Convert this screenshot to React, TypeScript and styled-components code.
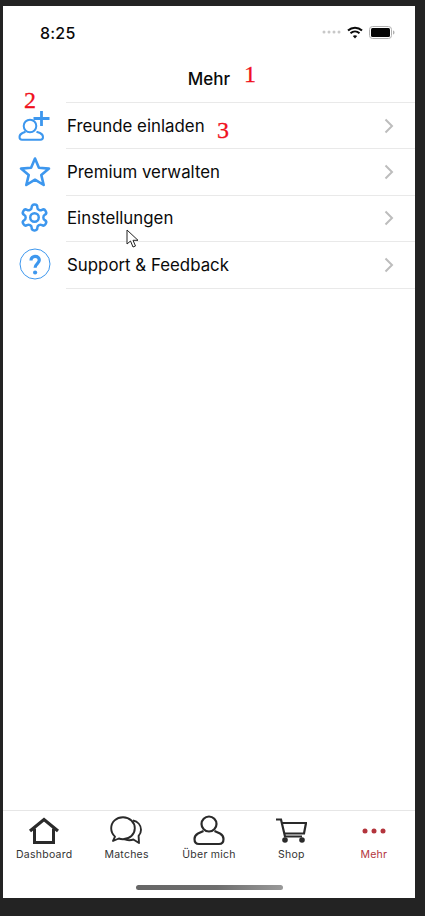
import styled, { createGlobalStyle } from 'styled-components'
import type { ReactNode } from 'react'

const GlobalStyle = createGlobalStyle`
	html, body {
		margin: 0;
		padding: 0;
		height: 100%;
		background: #232323;
		overflow: hidden;
	}
`

const Screen = styled.div`
	position: relative;
	box-sizing: border-box;
	display: flex;
	flex-direction: column;
	width: 412px;
	height: 892px;
	margin: 6px 0 0 3px;
	background: #fff;
	font-family: Inter, 'Liberation Sans', sans-serif;
	color: #0a0a0a;
`

const StatusBar = styled.div`
	display: flex;
	align-items: center;
	justify-content: space-between;
	height: 52px;
	padding: 0 20px 0 37px;
	box-sizing: border-box;
`

const Time = styled.span`
	font-size: 16px;
	font-weight: 500;
	letter-spacing: 0.2px;
	margin-top: 1px;
`

const StatusIcons = styled.div`
	display: flex;
	align-items: center;
	gap: 6px;
`

const Header = styled.h1`
	margin: 0;
	height: 44px;
	padding-bottom: 2px;
	box-sizing: border-box;
	display: flex;
	align-items: center;
	justify-content: center;
	font-size: 17px;
	font-weight: 500;
`

const List = styled.div`
	display: flex;
	flex-direction: column;
	flex: 1;
`

const Row = styled.div`
	display: flex;
	align-items: center;
	height: 46.4px;
`

const RowIcon = styled.div`
	display: flex;
	align-items: center;
	justify-content: center;
	width: 63px;
	flex: none;
	color: #3d97ee;
`

const RowBody = styled.div`
	flex: 1;
	height: 100%;
	display: flex;
	align-items: center;
	justify-content: space-between;
	padding: 0 21px 0 1px;
	box-sizing: border-box;
	border-top: 1px solid #e9e9e9;
	font-size: 16.85px;
`

const LastLine = styled.div`
	height: 1px;
	margin-left: 63px;
	background: #e9e9e9;
`

const TabBar = styled.nav`
	display: flex;
	height: 88px;
	box-sizing: border-box;
	border-top: 1px solid #e6e6e6;
	padding-top: 4px;
`

const Tab = styled.div<{ $active?: boolean }>`
	flex: 1;
	display: flex;
	flex-direction: column;
	align-items: center;
	font-size: 10.5px;
	font-weight: 400;
	letter-spacing: 0.25px;
	color: ${(p) => (p.$active ? '#b3343c' : '#333')};
`

const TabIcon = styled.div`
	height: 31px;
	display: flex;
	align-items: center;
	justify-content: center;
`

const TabLabel = styled.span`
	margin-top: 2px;
`

const HomeIndicator = styled.div`
	position: absolute;
	left: 133px;
	bottom: 8px;
	width: 147px;
	height: 5px;
	border-radius: 3px;
	background: linear-gradient(90deg, #666 0%, #6e6e6e 55%, #999 100%);
`

const Note = styled.span<{ $x: number; $y: number }>`
	position: absolute;
	left: ${(p) => p.$x}px;
	top: ${(p) => p.$y}px;
	font-family: 'Liberation Serif', serif;
	font-size: 24px;
	line-height: 24px;
	color: #f0101c;
	-webkit-text-stroke: 0.3px #f0101c;
`

const Cursor = styled.svg`
	position: absolute;
	left: 123px;
	top: 223px;
`

const Chevron = () => (
	<svg width="10" height="16" viewBox="0 0 10 16" fill="none" stroke="#bdbdbd" strokeWidth="2">
		<path d="M1.5 1.5 8 8l-6.5 6.5" />
	</svg>
)

const AddFriendIcon = () => (
	<svg width="33" height="32" viewBox="0 0 33 32" fill="none" stroke="currentColor" strokeWidth="2">
		<circle cx="12" cy="17" r="6.300" />
		<path d="M7.500 22.800 4.500 24C2.500 25 1.500 26.500 1.500 28c0 1.800 1 2.800 2.500 2.800h18.500c1.500 0 2.500-1 2.500-2.800 0-1.500-1-3-3-4l-3.500-1.200" />
		<path d="M23.500 2v15M15.500 9.500h16" strokeWidth="2.800" />
	</svg>
)

const StarIcon = () => (
	<svg width="32" height="31" viewBox="0 0 32 31" fill="none" stroke="currentColor" strokeWidth="2.600" strokeLinejoin="round">
		<path d="M16 2.500l3.900 9.300 10.100.8-7.700 6.500 2.400 9.900L16 23.700 7.300 29l2.400-9.900L2 12.600l10.100-.8z" />
	</svg>
)

const GearIcon = () => (
	<svg width="31" height="31" viewBox="0 0 24 24" fill="none" stroke="currentColor" strokeWidth="1.900" strokeLinecap="round" strokeLinejoin="round">
		<path d="M12.220 2h-.44a2 2 0 0 0-2 2v.18a2 2 0 0 1-1 1.730l-.43.250a2 2 0 0 1-2 0l-.15-.080a2 2 0 0 0-2.730.730l-.220.380a2 2 0 0 0 .730 2.730l.150.100a2 2 0 0 1 1 1.720v.510a2 2 0 0 1-1 1.740l-.150.090a2 2 0 0 0-.730 2.730l.220.380a2 2 0 0 0 2.730.730l.150-.080a2 2 0 0 1 2 0l.43.250a2 2 0 0 1 1 1.730V20a2 2 0 0 0 2 2h.44a2 2 0 0 0 2-2v-.18a2 2 0 0 1 1-1.730l.43-.250a2 2 0 0 1 2 0l.15.080a2 2 0 0 0 2.730-.730l.220-.390a2 2 0 0 0-.730-2.730l-.150-.080a2 2 0 0 1-1-1.740v-.500a2 2 0 0 1 1-1.740l.150-.090a2 2 0 0 0 .730-2.730l-.220-.380a2 2 0 0 0-2.730-.730l-.150.080a2 2 0 0 1-2 0l-.43-.250a2 2 0 0 1-1-1.730V4a2 2 0 0 0-2-2z" />
		<circle cx="12" cy="12" r="3.300" />
	</svg>
)

const HelpIcon = () => (
	<svg width="32" height="32" viewBox="0 0 32 32" fill="none" stroke="currentColor">
		<circle cx="16" cy="16" r="15" strokeWidth="1" />
		<path d="M12 12.500c0-2.600 1.800-4.200 4.200-4.200s4.100 1.500 4.100 3.800c0 3.400-4.200 3.600-4.200 7.700" strokeWidth="3.200" />
		<circle cx="16.100" cy="24.500" r="2.100" fill="currentColor" stroke="none" />
	</svg>
)

const HomeTabIcon = () => (
	<svg width="32" height="27" viewBox="0 0 32 27" fill="none" stroke="#2a2a2a" strokeWidth="3" strokeLinejoin="miter">
		<path d="M2 14 16 2.500 30 14" strokeWidth="3.200" />
		<path d="M6.500 11.500V25.500h19V11.500" />
	</svg>
)

const ChatTabIcon = () => (
	<svg width="33" height="29" viewBox="0 0 33 29" fill="none" stroke="#2a2a2a" strokeWidth="1.900" strokeLinejoin="round">
		<path d="M13 1.200C6.300 1.200 1.200 6 1.200 12.300c0 3.400 1.500 6.300 3.800 8.300L3 25l5.800-2.500c1.300.5 2.700.7 4.200.7 6.700 0 11.800-4.800 11.800-10.900S19.700 1.200 13 1.200z" />
		<path d="M23 4.500c4.800 1 8 4.700 8 9.200 0 2.400-.9 4.500-2.400 6.100L29 27l-5.600-3.500c-1.300.5-2.700.7-4.200.7-1.800 0-3.500-.3-5-1" />
	</svg>
)

const UserTabIcon = () => (
	<svg width="32" height="31" viewBox="0 0 32 31" fill="none" stroke="#2a2a2a" strokeWidth="2.200">
		<circle cx="16" cy="9" r="7.500" />
		<path d="M10.500 16 5 18.500C2.500 19.800 1.500 21.500 1.500 24c0 3 1.500 5 4.500 5h20c3 0 4.500-2 4.500-5 0-2.500-1-4.200-3.500-5.500L21.500 16" />
	</svg>
)

const CartTabIcon = () => (
	<svg width="32" height="27" viewBox="0 0 32 27" fill="none" stroke="#2a2a2a" strokeWidth="2.200">
		<path d="M1 2.500h5l4 17h17" />
		<path d="M7 6h24l-2 10.500H9.500" />
		<circle cx="10" cy="23" r="2.800" fill="#2a2a2a" stroke="none" />
		<circle cx="27" cy="23" r="2.800" fill="#2a2a2a" stroke="none" />
	</svg>
)

const MoreTabIcon = () => (
	<svg width="24" height="6" viewBox="0 0 24 6" fill="#b3343c">
		<circle cx="3" cy="3" r="2.500" />
		<circle cx="12" cy="3" r="2.500" />
		<circle cx="21" cy="3" r="2.500" />
	</svg>
)

const SignalDots = () => (
	<svg width="19" height="4" viewBox="0 0 19 4" fill="#c8c8c8">
		<circle cx="2" cy="2" r="1.500" />
		<circle cx="7" cy="2" r="1.500" />
		<circle cx="12" cy="2" r="1.500" />
		<circle cx="17" cy="2" r="1.500" />
	</svg>
)

const WifiIcon = () => (
	<svg width="16" height="13" viewBox="0 0 16 13" fill="none" stroke="#0a0a0a" strokeWidth="2">
		<path d="M1 4.500C5 .8 11 .8 15 4.500" />
		<path d="M3.500 7.300c2.600-2.300 6.400-2.300 9 0" />
		<path d="M8 12.500 5.800 10c1.300-1.100 3.100-1.100 4.400 0z" fill="#0a0a0a" stroke="none" />
	</svg>
)

const BatteryIcon = () => (
	<svg width="26" height="13" viewBox="0 0 26 13">
		<rect x="0.500" y="0.500" width="22" height="12" rx="3" fill="none" stroke="#b0b0b0" />
		<rect x="2" y="2" width="19" height="9" rx="1.500" fill="#050505" />
		<path d="M24 4.500c1 .3 1.500 1 1.500 2s-.5 1.700-1.500 2z" fill="#b0b0b0" />
	</svg>
)

const items: { label: string; icon: ReactNode }[] = [
	{ label: 'Freunde einladen', icon: <AddFriendIcon /> },
	{ label: 'Premium verwalten', icon: <StarIcon /> },
	{ label: 'Einstellungen', icon: <GearIcon /> },
	{ label: 'Support & Feedback', icon: <HelpIcon /> },
]

const tabs: { label: string; icon: ReactNode; active?: boolean }[] = [
	{ label: 'Dashboard', icon: <HomeTabIcon /> },
	{ label: 'Matches', icon: <ChatTabIcon /> },
	{ label: 'Über mich', icon: <UserTabIcon /> },
	{ label: 'Shop', icon: <CartTabIcon /> },
	{ label: 'Mehr', icon: <MoreTabIcon />, active: true },
]

export default function App() {
	return (
		<>
			<GlobalStyle />
			<Screen>
				<StatusBar>
					<Time>8:25</Time>
					<StatusIcons>
						<SignalDots />
						<WifiIcon />
						<BatteryIcon />
					</StatusIcons>
				</StatusBar>
				<Header>Mehr</Header>
				<List>
					{items.map(({ label, icon }) => (
						<Row key={label}>
							<RowIcon>{icon}</RowIcon>
							<RowBody>
								{label}
								<Chevron />
							</RowBody>
						</Row>
					))}
					<LastLine />
				</List>
				<TabBar>
					{tabs.map(({ label, icon, active }) => (
						<Tab key={label} $active={active}>
							<TabIcon>{icon}</TabIcon>
							<TabLabel>{label}</TabLabel>
						</Tab>
					))}
				</TabBar>
				<HomeIndicator />
				<Note $x={241} $y={56}>1</Note>
				<Note $x={21} $y={82}>2</Note>
				<Note $x={214} $y={112}>3</Note>
				<Cursor width="14" height="20" viewBox="0 0 14 20">
					<path d="M1 1v14l3.500-3 2.500 6 2.500-1-2.500-5.700H12z" fill="#fff" stroke="#222" strokeWidth="1" />
				</Cursor>
			</Screen>
		</>
	)
}
